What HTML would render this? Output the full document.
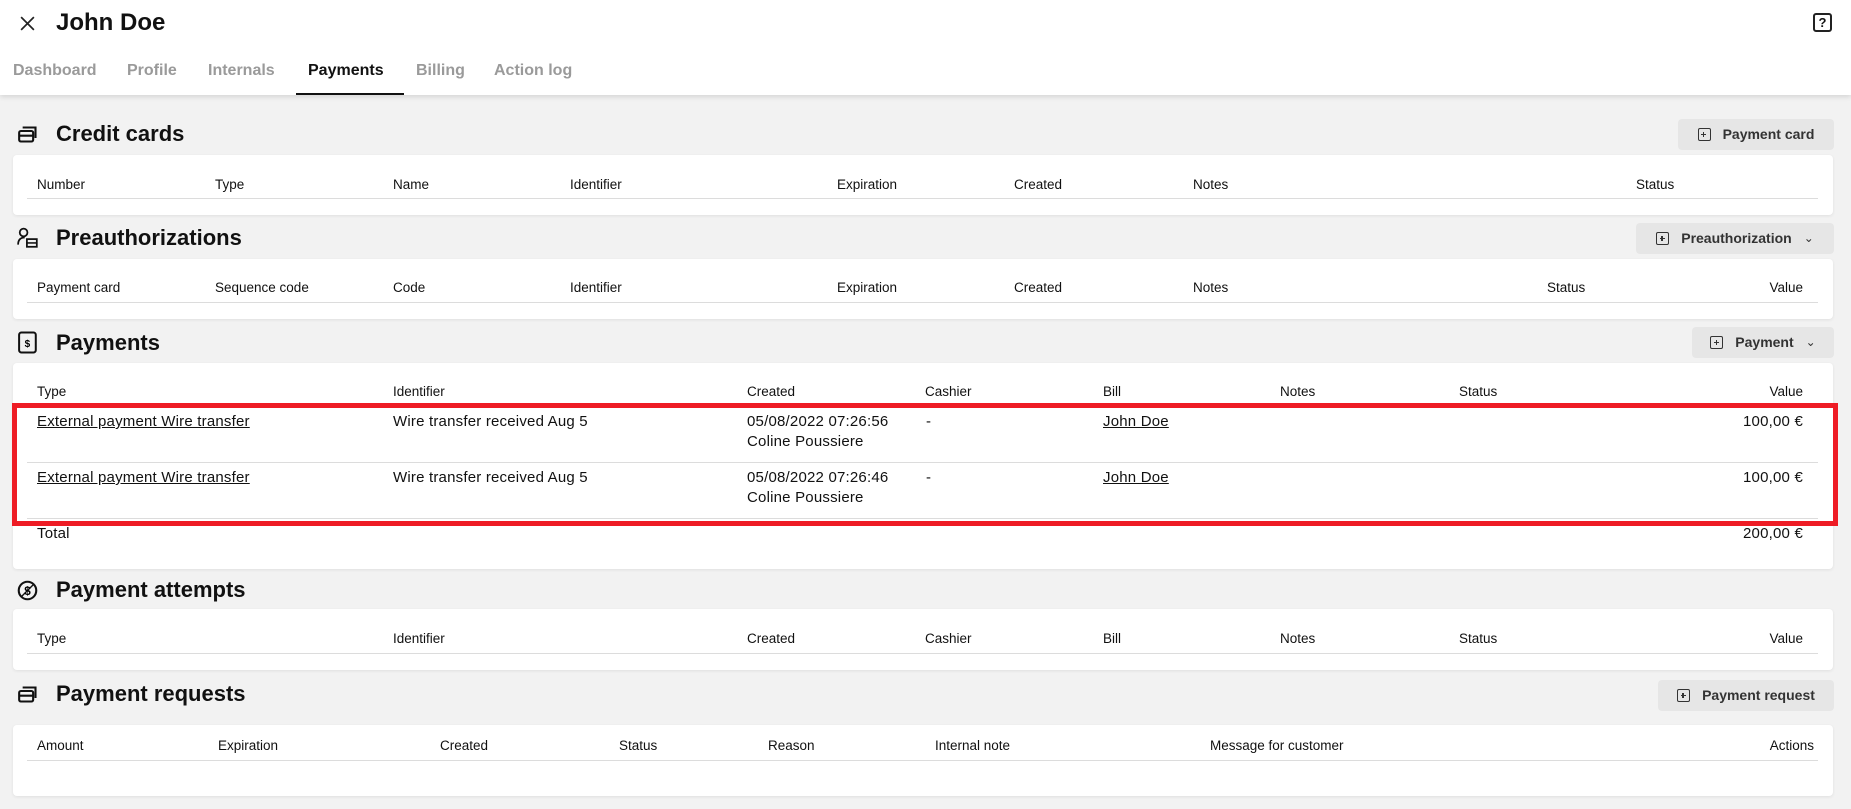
<!DOCTYPE html>
<html><head><meta charset="utf-8"><style>
*{margin:0;padding:0;box-sizing:border-box}
body{width:1851px;height:809px;background:#f2f2f2;font-family:"Liberation Sans",sans-serif;color:#111;position:relative;overflow:hidden}
.a{position:absolute;white-space:nowrap;line-height:20px}
.hdr{position:absolute;left:0;top:0;width:1851px;height:95px;background:#fff;box-shadow:0 2px 5px rgba(0,0,0,.12)}
.tab{font-size:16px;font-weight:bold;color:#9a9a9a}
.card{position:absolute;left:13px;width:1820px;background:#fff;border-radius:4px;box-shadow:0 1px 3px rgba(0,0,0,.08)}
.line{position:absolute;left:27px;width:1791px;height:1px;background:#dcdcdc}
.h{font-size:13.5px}
.r{font-size:15px;letter-spacing:.2px}
.u{text-decoration:underline}
.t{font-size:22px;font-weight:bold;left:56px}
.btn{position:absolute;background:#e6e6e6;border-radius:4px;font-size:14px;font-weight:bold;color:#333;height:31px;line-height:31px;display:flex;align-items:center;justify-content:center;gap:12px}
.pb{width:13px;height:13px;border:1.5px solid #333;border-radius:2px;position:relative;display:inline-block}
.pb:before{content:"";position:absolute;left:2.5px;top:4.75px;width:5px;height:1.5px;background:#333}
.pb:after{content:"";position:absolute;left:4.25px;top:3px;width:1.5px;height:5px;background:#333}
.rt{text-align:right}
</style></head><body>
<div class="hdr"></div>
<svg class="a" style="left:19px;top:15px" width="17" height="17" viewBox="0 0 16 16"><path d="M2 2L14 14M14 2L2 14" stroke="#222" stroke-width="1.6"/></svg>
<div class="a" style="left:56px;top:8px;font-size:24px;font-weight:bold;line-height:30px">John Doe</div>
<div class="a" style="left:1813px;top:13px;width:19px;height:19px;border:2px solid #222;border-radius:3px;font-size:13px;font-weight:bold;line-height:15px;text-align:center">?</div>
<div class="a tab" style="left:13px;top:61px">Dashboard</div>
<div class="a tab" style="left:127px;top:61px">Profile</div>
<div class="a tab" style="left:208px;top:61px">Internals</div>
<div class="a tab" style="left:308px;top:61px;color:#111">Payments</div>
<div class="a tab" style="left:416px;top:61px">Billing</div>
<div class="a tab" style="left:494px;top:61px">Action log</div>
<div class="a" style="left:296px;top:93px;width:108px;height:2px;background:#111"></div>

<!-- Credit cards -->
<svg class="a" style="left:18px;top:125px" width="21" height="19" viewBox="0 0 18 16"><rect x="1" y="5" width="12" height="9" rx="1.5" fill="none" stroke="#111" stroke-width="1.8"/><path d="M1 9H13M4 2H15V11" fill="none" stroke="#111" stroke-width="1.8"/></svg>
<div class="a t" style="top:121px;line-height:26px">Credit cards</div>
<div class="btn" style="left:1678px;top:119px;width:156px"><span class="pb"></span>Payment card</div>
<div class="card" style="top:155px;height:60px"></div>
<div class="line" style="top:198px"></div>
<div class="a h" style="left:37px;top:175px">Number</div>
<div class="a h" style="left:215px;top:175px">Type</div>
<div class="a h" style="left:393px;top:175px">Name</div>
<div class="a h" style="left:570px;top:175px">Identifier</div>
<div class="a h" style="left:837px;top:175px">Expiration</div>
<div class="a h" style="left:1014px;top:175px">Created</div>
<div class="a h" style="left:1193px;top:175px">Notes</div>
<div class="a h" style="left:1636px;top:175px">Status</div>

<!-- Preauth -->
<svg class="a" style="left:17px;top:227px" width="22" height="22" viewBox="0 0 20 20"><circle cx="6" cy="5" r="3.5" fill="none" stroke="#111" stroke-width="1.6"/><path d="M1 16C1 11 4 9.5 7 9.5" fill="none" stroke="#111" stroke-width="1.6"/><rect x="9" y="11" width="9" height="7" fill="none" stroke="#111" stroke-width="1.6"/><path d="M9 14.5H18" stroke="#111" stroke-width="1.4"/></svg>
<div class="a t" style="top:225px;line-height:26px">Preauthorizations</div>
<div class="btn" style="left:1636px;top:223px;width:198px"><span class="pb"></span>Preauthorization<span style="font-weight:normal;font-size:12px">&#8964;</span></div>
<div class="card" style="top:259px;height:60px"></div>
<div class="line" style="top:302px"></div>
<div class="a h" style="left:37px;top:278px">Payment card</div>
<div class="a h" style="left:215px;top:278px">Sequence code</div>
<div class="a h" style="left:393px;top:278px">Code</div>
<div class="a h" style="left:570px;top:278px">Identifier</div>
<div class="a h" style="left:837px;top:278px">Expiration</div>
<div class="a h" style="left:1014px;top:278px">Created</div>
<div class="a h" style="left:1193px;top:278px">Notes</div>
<div class="a h" style="left:1547px;top:278px">Status</div>
<div class="a h rt" style="left:1700px;width:103px;top:278px">Value</div>

<!-- Payments -->
<svg class="a" style="left:18px;top:331px" width="20" height="23" viewBox="0 0 18 20"><rect x="1" y="1" width="15" height="18" rx="2" fill="none" stroke="#111" stroke-width="1.8"/><text x="8.5" y="14" font-size="9" font-weight="bold" text-anchor="middle" font-family="Liberation Sans">$</text></svg>
<div class="a t" style="top:330px;line-height:26px">Payments</div>
<div class="btn" style="left:1692px;top:327px;width:142px"><span class="pb"></span>Payment<span style="font-weight:normal;font-size:12px">&#8964;</span></div>
<div class="card" style="top:363px;height:206px"></div>
<div class="line" style="top:405px"></div>
<div class="a h" style="left:37px;top:382px">Type</div>
<div class="a h" style="left:393px;top:382px">Identifier</div>
<div class="a h" style="left:747px;top:382px">Created</div>
<div class="a h" style="left:925px;top:382px">Cashier</div>
<div class="a h" style="left:1103px;top:382px">Bill</div>
<div class="a h" style="left:1280px;top:382px">Notes</div>
<div class="a h" style="left:1459px;top:382px">Status</div>
<div class="a h rt" style="left:1700px;width:103px;top:382px">Value</div>

<div class="a r u" style="left:37px;top:412px">External payment Wire transfer</div>
<div class="a r" style="left:393px;top:412px">Wire transfer received Aug 5</div>
<div class="a r" style="left:747px;top:412px">05/08/2022 07:26:56</div>
<div class="a r" style="left:747px;top:432px">Coline Poussiere</div>
<div class="a r" style="left:926px;top:412px">-</div>
<div class="a r u" style="left:1103px;top:412px">John Doe</div>
<div class="a r rt" style="left:1700px;width:103px;top:412px">100,00 €</div>
<div class="line" style="top:462px"></div>
<div class="a r u" style="left:37px;top:468px">External payment Wire transfer</div>
<div class="a r" style="left:393px;top:468px">Wire transfer received Aug 5</div>
<div class="a r" style="left:747px;top:468px">05/08/2022 07:26:46</div>
<div class="a r" style="left:747px;top:488px">Coline Poussiere</div>
<div class="a r" style="left:926px;top:468px">-</div>
<div class="a r u" style="left:1103px;top:468px">John Doe</div>
<div class="a r rt" style="left:1700px;width:103px;top:468px">100,00 €</div>
<div class="line" style="top:518px"></div>
<div class="a r" style="left:37px;top:524px">Total</div>
<div class="a r rt" style="left:1700px;width:103px;top:524px">200,00 €</div>
<div class="a" style="left:12px;top:403px;width:1826px;height:123px;border:5px solid #ee1c25"></div>

<!-- Attempts -->
<svg class="a" style="left:17px;top:580px" width="21" height="21" viewBox="0 0 18 18"><circle cx="9" cy="9" r="7.5" fill="none" stroke="#111" stroke-width="1.8"/><path d="M4 14L14 4" stroke="#111" stroke-width="1.2"/><text x="9" y="13" font-size="10" font-weight="bold" text-anchor="middle" font-family="Liberation Sans">$</text></svg>
<div class="a t" style="top:577px;line-height:26px">Payment attempts</div>
<div class="card" style="top:609px;height:61px"></div>
<div class="line" style="top:653px"></div>
<div class="a h" style="left:37px;top:629px">Type</div>
<div class="a h" style="left:393px;top:629px">Identifier</div>
<div class="a h" style="left:747px;top:629px">Created</div>
<div class="a h" style="left:925px;top:629px">Cashier</div>
<div class="a h" style="left:1103px;top:629px">Bill</div>
<div class="a h" style="left:1280px;top:629px">Notes</div>
<div class="a h" style="left:1459px;top:629px">Status</div>
<div class="a h rt" style="left:1700px;width:103px;top:629px">Value</div>

<!-- Requests -->
<svg class="a" style="left:18px;top:685px" width="21" height="19" viewBox="0 0 18 16"><rect x="1" y="5" width="12" height="9" rx="1.5" fill="none" stroke="#111" stroke-width="1.8"/><path d="M1 9H13M4 2H15V11" fill="none" stroke="#111" stroke-width="1.8"/></svg>
<div class="a t" style="top:681px;line-height:26px">Payment requests</div>
<div class="btn" style="left:1658px;top:680px;width:176px"><span class="pb"></span>Payment request</div>
<div class="card" style="top:725px;height:71px"></div>
<div class="line" style="top:760px"></div>
<div class="a h" style="left:37px;top:736px">Amount</div>
<div class="a h" style="left:218px;top:736px">Expiration</div>
<div class="a h" style="left:440px;top:736px">Created</div>
<div class="a h" style="left:619px;top:736px">Status</div>
<div class="a h" style="left:768px;top:736px">Reason</div>
<div class="a h" style="left:935px;top:736px">Internal note</div>
<div class="a h" style="left:1210px;top:736px">Message for customer</div>
<div class="a h rt" style="left:1700px;width:114px;top:736px">Actions</div>
</body></html>
